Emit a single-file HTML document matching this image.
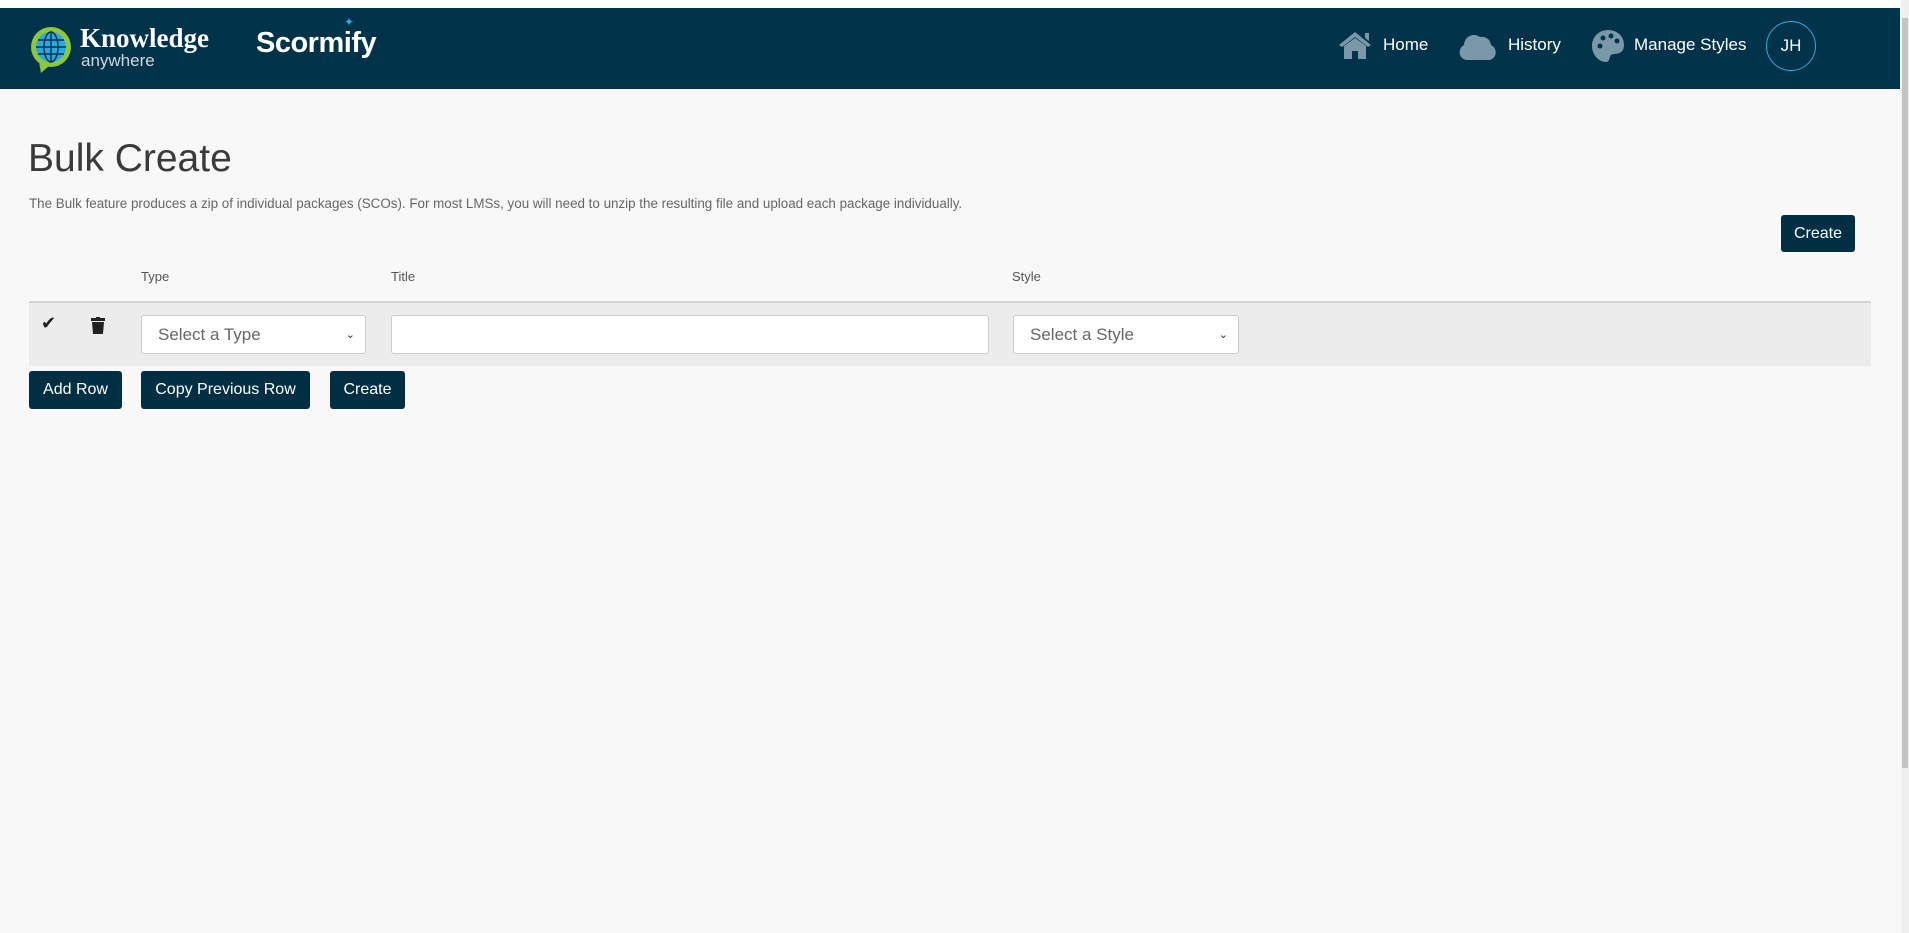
<!DOCTYPE html>
<html><head><style>
body{margin:0;width:1909px;height:933px;background:#f8f8f8;font-family:"Liberation Sans",sans-serif;position:relative;overflow:hidden;color:#333}
.a{position:absolute}
.hdr{left:0;top:8px;width:1900px;height:81px;background:#003349}
.nav{color:#fff;font-size:17px;top:35px}
.btn{position:absolute;background:#002f44;color:#fff;font-size:16px;border-radius:3px;display:flex;align-items:center;justify-content:center}
.sel{position:absolute;background:#fff;border:1px solid #ccc;border-radius:3px;color:#666;font-size:17px;box-sizing:border-box;display:flex;align-items:center;padding-left:16px}
.lbl{position:absolute;top:269px;font-size:13px;color:#555}
</style></head><body>
<div class="a" style="left:0;top:0;width:1909px;height:8px;background:#fff"></div>
<div class="a hdr"></div>
<div class="a" style="left:1901px;top:0;width:8px;height:933px;background:#f0f0f0"></div>
<div class="a" style="left:1902px;top:18px;width:6px;height:750px;background:#c4c4c4"></div>
<svg class="a" style="left:29px;top:26px" width="46" height="48" viewBox="0 0 46 48"><circle cx="22" cy="21" r="20" fill="#8dc63f"/><path d="M10 36 L12 47 L20 40Z" fill="#8dc63f"/><circle cx="22" cy="21" r="15" fill="#29abe2"/><g stroke="#003349" stroke-width="1.5" fill="none"><ellipse cx="22" cy="21" rx="7" ry="15"/><path d="M7 21h30M9 14h26M9 28h26M22 6v30"/></g></svg>
<div class="a" style="left:80px;top:23px;color:#fff;font-family:'Liberation Serif',serif;font-weight:bold;font-size:27px">Knowledge</div>
<div class="a" style="left:81px;top:51px;color:#cfd8dc;font-size:17px">anywhere</div>
<div class="a" style="left:256px;top:27px;color:#fff;font-weight:bold;font-size:29px;letter-spacing:-0.5px">Scormify</div>
<div class="a" style="left:344px;top:15px;color:#29abe2;font-size:12px">✦</div>
<svg class="a" style="left:1337px;top:30px" width="36" height="30" viewBox="0 0 36 30"><path d="M2 15 L18 2 L34 15 L31 17 L18 7 L5 17Z M28 3h4v8l-4-3z" fill="#7b98a8"/><path d="M7 16 L18 8 L29 16 V29 H21 V21 H15 V29 H7Z" fill="#7b98a8"/></svg>
<div class="a nav" style="left:1383px">Home</div>
<svg class="a" style="left:1458px;top:31px" width="40" height="30" viewBox="0 0 40 30"><path d="M8 29 A8 8 0 0 1 6 14 A10 10 0 0 1 22 6 A9 9 0 0 1 33 14 A8 8 0 0 1 32 29Z" fill="#7b98a8"/></svg>
<div class="a nav" style="left:1508px">History</div>
<svg class="a" style="left:1591px;top:29px" width="34" height="34" viewBox="0 0 34 34"><path d="M17 1 C8 1 1 8 1 17 C1 26 8 33 15 33 C19 33 18 28 20 26 C22 24 33 27 33 16 C33 7 26 1 17 1Z" fill="#7b98a8"/><circle cx="9" cy="17" r="2.5" fill="#003349"/><circle cx="12" cy="9" r="2.5" fill="#003349"/><circle cx="20" cy="7" r="2.5" fill="#003349"/><circle cx="26" cy="12" r="2.5" fill="#003349"/></svg>
<div class="a nav" style="left:1634px">Manage Styles</div>
<div class="a" style="left:1766px;top:21px;width:48px;height:48px;border:1px solid #29abe2;border-radius:50%;color:#fff;font-size:17px;display:flex;align-items:center;justify-content:center">JH</div>
<div class="a" style="left:28px;top:137px;font-size:39px;color:#3a3a3a">Bulk Create</div>
<div class="a" style="left:29px;top:196px;font-size:13.4px;color:#666">The Bulk feature produces a zip of individual packages (SCOs). For most LMSs, you will need to unzip the resulting file and upload each package individually.</div>
<div class="btn" style="left:1781px;top:215px;width:74px;height:37px">Create</div>
<div class="lbl" style="left:141px">Type</div>
<div class="lbl" style="left:391px">Title</div>
<div class="lbl" style="left:1012px">Style</div>
<div class="a" style="left:29px;top:301px;width:1842px;height:63px;background:#ececec;border-top:2px solid #d4d4d4"></div>
<div class="a" style="left:41px;top:313px;font-size:18px;color:#222">✔</div>
<svg class="a" style="left:91px;top:317px" width="14" height="17" viewBox="0 0 14 17"><rect x="0" y="1" width="14" height="3" fill="#222"/><rect x="5" y="0" width="4" height="2" fill="#222"/><path d="M1 5h12l-1 12H2z" fill="#222"/></svg>
<div class="sel" style="left:141px;top:315px;width:225px;height:39px">Select a Type<span style="position:absolute;right:10px;font-size:11px;color:#333">⌄</span></div>
<div class="sel" style="left:391px;top:315px;width:598px;height:39px"></div>
<div class="sel" style="left:1013px;top:315px;width:226px;height:39px">Select a Style<span style="position:absolute;right:10px;font-size:11px;color:#333">⌄</span></div>
<div class="btn" style="left:29px;top:371px;width:93px;height:38px">Add Row</div>
<div class="btn" style="left:141px;top:371px;width:169px;height:38px">Copy Previous Row</div>
<div class="btn" style="left:330px;top:371px;width:75px;height:38px">Create</div>
</body></html>
